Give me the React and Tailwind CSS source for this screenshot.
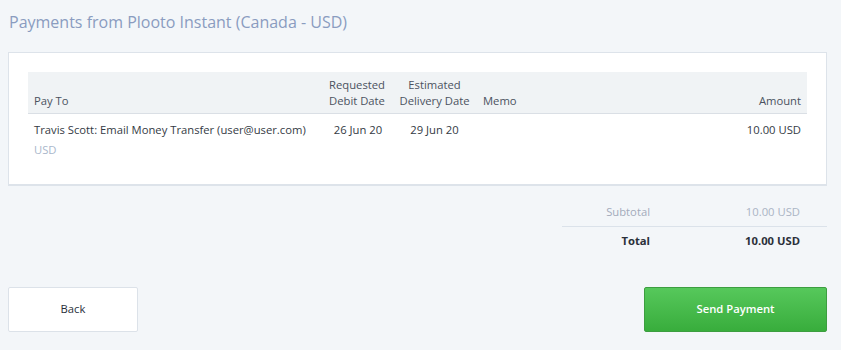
import React from 'react';

const font = { fontFamily: '"Open Sans", "Noto Sans", sans-serif' };

const payments = [
  {
    payTo: 'Travis Scott: Email Money Transfer (user@user.com)',
    currency: 'USD',
    debitDate: '26 Jun 20',
    deliveryDate: '29 Jun 20',
    memo: '',
    amount: '10.00 USD',
  },
];

export default function App() {
  return (
    <div className="min-h-[350px] w-[841px] bg-[#f3f6f9] pl-2 pr-[14px] pt-[10px]" style={font}>
      {/* Title */}
      <h1 className="pl-px text-[16px] leading-[24px] text-[#8a9cc0]">
        Payments from Plooto Instant (Canada - USD)
      </h1>

      {/* Payments card */}
      <div className="mt-[18px] border border-[#dde3ea] border-b-2 bg-white px-[19px] pt-[19px] pb-[19px]">
        <div className="text-[11.25px] text-[#3f4550]">
          {/* Header */}
          <div className="flex items-end h-[42px] bg-[#f0f3f5] border-b border-[#dadfe5] pb-[4px] text-[#4b5260]">
            <div className="w-[294px] px-[6px] leading-[16px]">Pay To</div>
            <div className="w-[70px] text-center leading-[16px]">Requested<br />Debit Date</div>
            <div className="w-[85px] text-center leading-[16px]">Estimated<br />Delivery Date</div>
            <div className="flex-1 px-[6px] leading-[16px]">Memo</div>
            <div className="px-[6px] leading-[16px] text-right">Amount</div>
          </div>

          {/* Rows */}
          {payments.map((p, i) => (
            <div key={i} className="flex items-start pt-[8px] h-[51px] text-[#343a44]">
              <div className="w-[294px] px-[6px]">
                <div className="leading-[16px]">{p.payTo}</div>
                <div className="mt-[4px] leading-[16px] text-[#a9b7cb]">{p.currency}</div>
              </div>
              <div className="w-[70px] text-center leading-[16px] pl-[2px]">{p.debitDate}</div>
              <div className="w-[85px] text-center leading-[16px]">{p.deliveryDate}</div>
              <div className="flex-1 px-[6px] leading-[16px]">{p.memo}</div>
              <div className="px-[6px] leading-[16px] text-right">{p.amount}</div>
            </div>
          ))}
        </div>
      </div>

      {/* Totals */}
      <div className="flex justify-end mt-[12px]">
        <div className="w-[265px] text-[11.25px]">
          <div className="flex h-[29px] items-center border-b border-[#dbe2ea] text-[#a3abbb]">
            <div className="w-[94px] pr-[6px] text-right">Subtotal</div>
            <div className="flex-1 pr-[27px] text-right text-[#aab4c4]">10.00 USD</div>
          </div>
          <div className="flex h-[28px] items-center font-bold text-[#2b303a]">
            <div className="w-[94px] pr-[6px] text-right">Total</div>
            <div className="flex-1 pr-[27px] text-right">10.00 USD</div>
          </div>
        </div>
      </div>

      {/* Actions */}
      <div className="flex justify-between mt-[32px]">
        <button className="w-[130px] h-[45px] rounded-[2px] border border-[#dce2e9] bg-white text-[11.25px] text-[#2a2f3a]">
          Back
        </button>
        <button className="w-[183px] h-[45px] rounded-[2px] border border-[#3c9e40] bg-gradient-to-b from-[#56c85b] to-[#38ad3c] text-[11.25px] font-semibold text-white">
          Send Payment
        </button>
      </div>
    </div>
  );
}
